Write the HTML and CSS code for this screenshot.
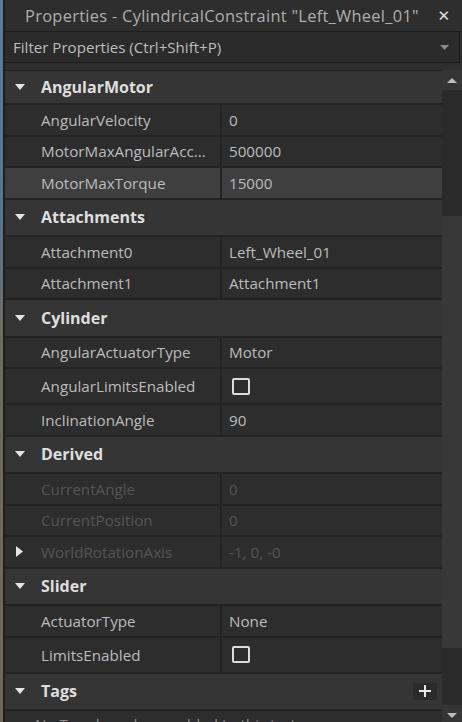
FILE: index.html
```html
<!DOCTYPE html>
<html lang="en">
<head>
<meta charset="utf-8">
<title>Properties</title>
<link rel="stylesheet" href="styles.css">
</head>
<body>
<div class="window">
  <div class="edge"></div>
  <div class="panel">
    <div class="titlebar">
      <span class="title">Properties - CylindricalConstraint "Left_Wheel_01"</span>
      <span class="close">&#x2715;</span>
    </div>
    <div class="filter">
      <span class="filter-text">Filter Properties (Ctrl+Shift+P)</span>
      <svg class="filter-arrow" width="9" height="5" viewBox="0 0 9 5"><polygon points="0,0 9,0 4.5,5" fill="#8a8a8a"/></svg>
    </div>
    <div class="body">
      <div class="list">
        <div class="group first">
          <svg class="caret" width="10" height="6" viewBox="0 0 10 6"><polygon points="0,0 10,0 5,6" fill="#e4e4e4"/></svg>
          <span class="group-name">AngularMotor</span>
        </div>
        <div class="row"><div class="name">AngularVelocity</div><div class="value">0</div></div>
        <div class="row"><div class="name">MotorMaxAngularAcc...</div><div class="value">500000</div></div>
        <div class="row selected"><div class="name">MotorMaxTorque</div><div class="value">15000</div></div>

        <div class="group">
          <svg class="caret" width="10" height="6" viewBox="0 0 10 6"><polygon points="0,0 10,0 5,6" fill="#e4e4e4"/></svg>
          <span class="group-name">Attachments</span>
        </div>
        <div class="row"><div class="name">Attachment0</div><div class="value">Left_Wheel_01</div></div>
        <div class="row"><div class="name">Attachment1</div><div class="value">Attachment1</div></div>

        <div class="group">
          <svg class="caret" width="10" height="6" viewBox="0 0 10 6"><polygon points="0,0 10,0 5,6" fill="#e4e4e4"/></svg>
          <span class="group-name">Cylinder</span>
        </div>
        <div class="row"><div class="name">AngularActuatorType</div><div class="value">Motor</div></div>
        <div class="row tall"><div class="name">AngularLimitsEnabled</div><div class="value"><span class="checkbox"></span></div></div>
        <div class="row"><div class="name">InclinationAngle</div><div class="value">90</div></div>

        <div class="group">
          <svg class="caret" width="10" height="6" viewBox="0 0 10 6"><polygon points="0,0 10,0 5,6" fill="#e4e4e4"/></svg>
          <span class="group-name">Derived</span>
        </div>
        <div class="row disabled"><div class="name">CurrentAngle</div><div class="value">0</div></div>
        <div class="row disabled"><div class="name">CurrentPosition</div><div class="value">0</div></div>
        <div class="row disabled">
          <div class="name">
            <svg class="expand" width="7" height="11" viewBox="0 0 7 11"><polygon points="0,0 7,5.5 0,11" fill="#e4e4e4"/></svg>
            WorldRotationAxis
          </div>
          <div class="value">-1, 0, -0</div>
        </div>

        <div class="group">
          <svg class="caret" width="10" height="6" viewBox="0 0 10 6"><polygon points="0,0 10,0 5,6" fill="#e4e4e4"/></svg>
          <span class="group-name">Slider</span>
        </div>
        <div class="row"><div class="name">ActuatorType</div><div class="value">None</div></div>
        <div class="row tall"><div class="name">LimitsEnabled</div><div class="value"><span class="checkbox"></span></div></div>

        <div class="group">
          <svg class="caret" width="10" height="6" viewBox="0 0 10 6"><polygon points="0,0 10,0 5,6" fill="#e4e4e4"/></svg>
          <span class="group-name">Tags</span>
          <span class="add-btn">
            <svg width="12" height="12" viewBox="0 0 12 12"><path d="M6 0v12M0 6h12" stroke="#e8e8e8" stroke-width="2"/></svg>
          </span>
        </div>
        <div class="empty-row">No Tags have been added to this instance</div>
      </div>
      <div class="scrollbar">
        <div class="sb-btn">
          <svg width="10" height="5" viewBox="0 0 10 5"><polygon points="0,5 10,5 5,0" fill="#bdbdbd"/></svg>
        </div>
        <div class="sb-track"><div class="sb-thumb"></div></div>
        <div class="sb-btn">
          <svg width="10" height="5" viewBox="0 0 10 5"><polygon points="0,0 10,0 5,5" fill="#bdbdbd"/></svg>
        </div>
      </div>
    </div>
  </div>
</div>
</body>
</html>
```
FILE: styles.css
```css
html, body {
  margin: 0;
  padding: 0;
  height: 722px;
  overflow: hidden;
  background: #2e2e2e;
}

.window {
  display: flex;
  height: 722px;
  font-family: "Open Sans", "Noto Sans", sans-serif;
  font-size: 15.2px;
  color: #bcbcbc;
}

/* desktop peeking past the panel's left border */
.edge {
  width: 3px;
  flex: none;
  background: linear-gradient(#5d7c98 0%, #587590 30%, #6e6a64 45%, #6b665f 100%);
}

.panel {
  flex: 1;
  display: flex;
  flex-direction: column;
  background: #2e2e2e;
  border-left: 2px solid #1f1f1f;
  min-width: 0;
}

.titlebar {
  height: 31px;
  flex: none;
  display: flex;
  align-items: center;
  padding: 0 12px 0 20px;
  background: #2e2e2e;
}

.title {
  flex: 1;
  color: #aeaeae;
  font-size: 16.4px;
  letter-spacing: 0.3px;
  white-space: nowrap;
}

.close {
  color: #e0e0e0;
  font-size: 15px;
  font-family: "DejaVu Sans", sans-serif;
}

.filter {
  flex: none;
  margin: 0 2px 0 -1px;
  display: flex;
  align-items: center;
  padding: 0 8px 0 8px;
  background: #2b2b2b;
  border: 1px solid #1c1c1c;
  box-sizing: border-box;
  height: 32px;
}

.filter-text {
  flex: 1;
  color: #bdbdbd;
  font-size: 15.1px;
}

.filter-arrow {
  margin-right: 2px;
}

.body {
  margin-top: 7px;
  height: 655px;
  flex: none;
  display: flex;
}

.list {
  flex: 1;
  display: flex;
  flex-direction: column;
  background: #232323;
  gap: 2px;
  overflow: hidden;
  min-width: 0;
}

.group {
  height: 35.5px;
  flex: none;
  display: flex;
  align-items: center;
  background: #353535;
  padding-left: 10px;
  padding-right: 5px;
}

.group.first {
  height: 32px;
  margin-top: 1px;
}

.caret {
  flex: none;
  margin-right: 16px;
}

.group-name {
  flex: 1;
  color: #dedede;
  font-weight: 700;
  font-size: 16px;
}

.add-btn {
  width: 24px;
  height: 17px;
  display: flex;
  align-items: center;
  justify-content: center;
  background: #2b2b2b;
}

.row {
  height: 29.5px;
  flex: none;
  display: flex;
  gap: 2px;
}

.row.tall {
  height: 34px;
}

.name, .value {
  display: flex;
  align-items: center;
  background: #2d2d2d;
  white-space: nowrap;
  overflow: hidden;
}

.name {
  width: 215px;
  flex: none;
  box-sizing: border-box;
  padding-left: 36px;
  position: relative;
}

.value {
  flex: 1;
  padding-left: 7px;
}

.row.selected .name,
.row.selected .value {
  background: #3f3f3f;
}

.row.disabled .name,
.row.disabled .value {
  color: #555555;
}

/* expander arrow for a property with children */
.expand {
  position: absolute;
  left: 11px;
  top: 50%;
  margin-top: -5.5px;
}

.checkbox {
  width: 14px;
  height: 13px;
  margin-left: 3px;
  border: 2px solid #dcdcdc;
  border-radius: 2px;
}

.empty-row {
  height: 30px;
  flex: none;
  background: #2d2d2d;
  padding-left: 30px;
  padding-top: 3px;
  color: #8a8a8a;
  white-space: nowrap;
}

.scrollbar {
  width: 20px;
  flex: none;
  display: flex;
  flex-direction: column;
  background: #2a2a2a;
}

.sb-btn {
  height: 20px;
  flex: none;
  display: flex;
  align-items: center;
  justify-content: center;
  background: #353535;
}

.sb-track {
  flex: 1;
}

.sb-thumb {
  margin-top: 126px;
  height: 432px;
  background: #383838;
}
```
